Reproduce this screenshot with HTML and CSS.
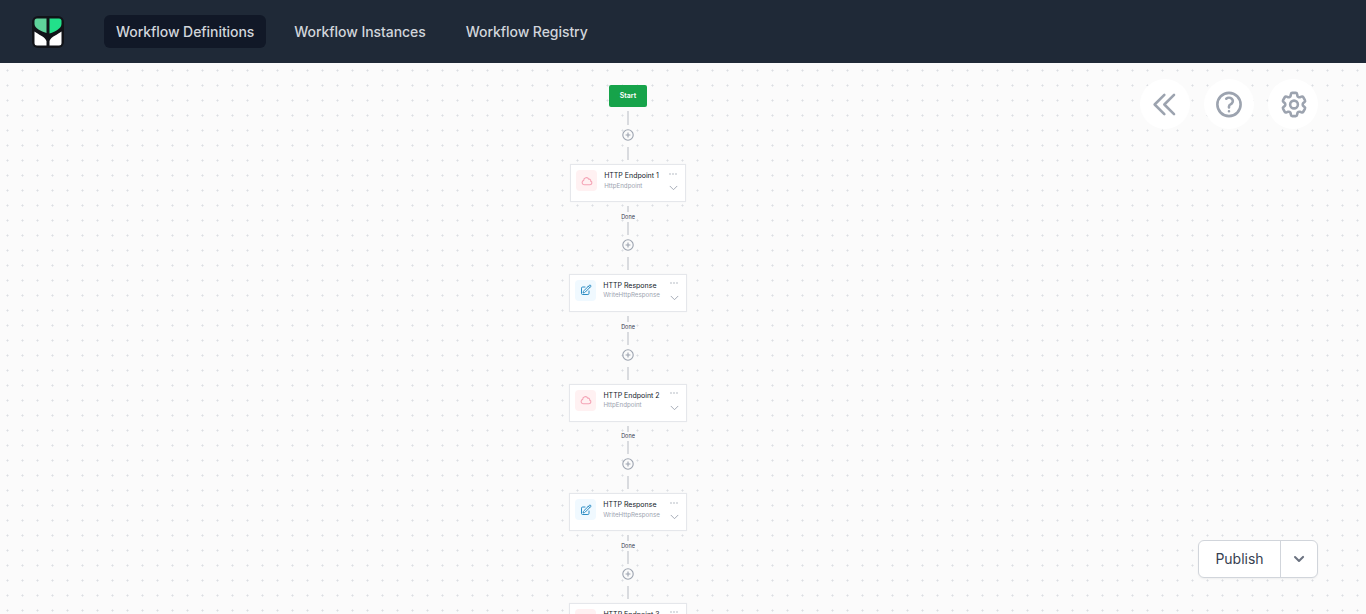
FILE: index.html
```html
<!DOCTYPE html>
<html lang="en">
<head>
<meta charset="utf-8">
<title>Workflow Designer</title>
<link rel="stylesheet" href="styles.css">
</head>
<body>
<header class="topbar">
  <svg class="logo" viewBox="0 0 32 32" aria-hidden="true">
    <rect width="32" height="32" rx="6" fill="#111318"/>
    <path d="M2.5 5Q2.5 2.5 5 2.5H14.5V17C9 15.5 2.5 12 2.5 8Z" fill="#5fd39b"/>
    <path d="M17.5 2.5H27Q29.5 2.5 29.5 5V8C29.5 12 24 15.5 17.5 17.5Z" fill="#22e08a"/>
    <path d="M2.5 15.5C6 18.5 13 20.5 14.5 25V29.5H5Q2.5 29.5 2.5 27Z" fill="#fff"/>
    <path d="M29.5 15.5C26 18.5 19 20.5 17.5 25V29.5H27Q29.5 29.5 29.5 27Z" fill="#fff"/>
  </svg>
  <nav class="nav">
    <a class="nav-item active">Workflow Definitions</a>
    <a class="nav-item">Workflow Instances</a>
    <a class="nav-item">Workflow Registry</a>
  </nav>
</header>
<main class="designer">
  <svg class="grid" aria-hidden="true">
    <defs>
      <pattern id="dots" x="0" y="0" width="15" height="15" patternUnits="userSpaceOnUse">
        <path d="M7.5 6v3M6 7.5h3" stroke="#e8eaed" stroke-width="1" fill="none"/>
        <rect x="7" y="7" width="1" height="1" fill="#dcdee2"/>
      </pattern>
    </defs>
    <rect width="100%" height="100%" fill="url(#dots)"/>
  </svg>
  <div class="flow">
    <div class="start">Start</div>
    <div class="edge">
      <span class="line l14"></span>
      <svg class="plus" viewBox="0 0 12 12"><circle cx="6" cy="6" r="5.2"/><path d="M6 3.6v4.8M3.6 6h4.8"/></svg>
      <span class="line l13"></span>
    </div>

    <div class="node">
      <span class="badge pink"><svg viewBox="0 0 24 24"><path d="M2.25 15a4.5 4.5 0 0 0 4.5 4.5H18a3.75 3.75 0 0 0 1.33-7.26 3 3 0 0 0-3.84-3.84A5.25 5.25 0 0 0 5.46 10.7 4.5 4.5 0 0 0 2.25 15Z"/></svg></span>
      <span class="labels"><b>HTTP Endpoint 1</b><small>HttpEndpoint</small></span>
      <span class="acts"><svg class="dots" viewBox="0 0 8 2"><circle cx="1" cy="1" r=".7"/><circle cx="4" cy="1" r=".7"/><circle cx="7" cy="1" r=".7"/></svg><svg class="chev" viewBox="0 0 8 5"><path d="M.7.7 4 4l3.3-3.3"/></svg></span>
    </div>
    <div class="edge">
      <span class="line l6"></span><span class="done">Done</span><span class="line l13"></span>
      <svg class="plus" viewBox="0 0 12 12"><circle cx="6" cy="6" r="5.2"/><path d="M6 3.6v4.8M3.6 6h4.8"/></svg>
      <span class="line l13"></span>
    </div>

    <div class="node">
      <span class="badge blue"><svg viewBox="0 0 24 24"><path d="m16.86 4.49 1.69-1.69a1.88 1.88 0 1 1 2.65 2.65L10.58 16.07a4.5 4.5 0 0 1-1.9 1.13L6 18l.8-2.68a4.5 4.5 0 0 1 1.13-1.9l8.93-8.93Zm0 0L19.5 7.13M18 14v4.75A2.25 2.25 0 0 1 15.75 21H5.25A2.25 2.25 0 0 1 3 18.75V8.25A2.25 2.25 0 0 1 5.25 6H10"/></svg></span>
      <span class="labels"><b>HTTP Response</b><small>WriteHttpResponse</small></span>
      <span class="acts"><svg class="dots" viewBox="0 0 8 2"><circle cx="1" cy="1" r=".7"/><circle cx="4" cy="1" r=".7"/><circle cx="7" cy="1" r=".7"/></svg><svg class="chev" viewBox="0 0 8 5"><path d="M.7.7 4 4l3.3-3.3"/></svg></span>
    </div>
    <div class="edge">
      <span class="line l6"></span><span class="done">Done</span><span class="line l13"></span>
      <svg class="plus" viewBox="0 0 12 12"><circle cx="6" cy="6" r="5.2"/><path d="M6 3.6v4.8M3.6 6h4.8"/></svg>
      <span class="line l13"></span>
    </div>

    <div class="node">
      <span class="badge pink"><svg viewBox="0 0 24 24"><path d="M2.25 15a4.5 4.5 0 0 0 4.5 4.5H18a3.75 3.75 0 0 0 1.33-7.26 3 3 0 0 0-3.84-3.84A5.25 5.25 0 0 0 5.46 10.7 4.5 4.5 0 0 0 2.25 15Z"/></svg></span>
      <span class="labels"><b>HTTP Endpoint 2</b><small>HttpEndpoint</small></span>
      <span class="acts"><svg class="dots" viewBox="0 0 8 2"><circle cx="1" cy="1" r=".7"/><circle cx="4" cy="1" r=".7"/><circle cx="7" cy="1" r=".7"/></svg><svg class="chev" viewBox="0 0 8 5"><path d="M.7.7 4 4l3.3-3.3"/></svg></span>
    </div>
    <div class="edge">
      <span class="line l6"></span><span class="done">Done</span><span class="line l13"></span>
      <svg class="plus" viewBox="0 0 12 12"><circle cx="6" cy="6" r="5.2"/><path d="M6 3.6v4.8M3.6 6h4.8"/></svg>
      <span class="line l13"></span>
    </div>

    <div class="node">
      <span class="badge blue"><svg viewBox="0 0 24 24"><path d="m16.86 4.49 1.69-1.69a1.88 1.88 0 1 1 2.65 2.65L10.58 16.07a4.5 4.5 0 0 1-1.9 1.13L6 18l.8-2.68a4.5 4.5 0 0 1 1.13-1.9l8.93-8.93Zm0 0L19.5 7.13M18 14v4.75A2.25 2.25 0 0 1 15.75 21H5.25A2.25 2.25 0 0 1 3 18.75V8.25A2.25 2.25 0 0 1 5.25 6H10"/></svg></span>
      <span class="labels"><b>HTTP Response</b><small>WriteHttpResponse</small></span>
      <span class="acts"><svg class="dots" viewBox="0 0 8 2"><circle cx="1" cy="1" r=".7"/><circle cx="4" cy="1" r=".7"/><circle cx="7" cy="1" r=".7"/></svg><svg class="chev" viewBox="0 0 8 5"><path d="M.7.7 4 4l3.3-3.3"/></svg></span>
    </div>
    <div class="edge">
      <span class="line l6"></span><span class="done">Done</span><span class="line l13"></span>
      <svg class="plus" viewBox="0 0 12 12"><circle cx="6" cy="6" r="5.2"/><path d="M6 3.6v4.8M3.6 6h4.8"/></svg>
      <span class="line l13"></span>
    </div>

    <div class="node">
      <span class="badge pink"><svg viewBox="0 0 24 24"><path d="M2.25 15a4.5 4.5 0 0 0 4.5 4.5H18a3.75 3.75 0 0 0 1.33-7.26 3 3 0 0 0-3.84-3.84A5.25 5.25 0 0 0 5.46 10.7 4.5 4.5 0 0 0 2.25 15Z"/></svg></span>
      <span class="labels"><b>HTTP Endpoint 3</b><small>HttpEndpoint</small></span>
      <span class="acts"><svg class="dots" viewBox="0 0 8 2"><circle cx="1" cy="1" r=".7"/><circle cx="4" cy="1" r=".7"/><circle cx="7" cy="1" r=".7"/></svg><svg class="chev" viewBox="0 0 8 5"><path d="M.7.7 4 4l3.3-3.3"/></svg></span>
    </div>
  </div>

  <div class="tools">
    <button class="tool" aria-label="Collapse"><svg viewBox="0 0 24 24"><path d="M11.1 19.5 3.6 12l7.5-7.5M18.6 19.5 11.1 12l7.5-7.5"/></svg></button>
    <button class="tool" aria-label="Help"><svg viewBox="0 0 24 24"><circle cx="11.6" cy="12" r="9"/><path d="M9.48 7.52c1.17-1.03 3.07-1.03 4.24 0 1.17 1.03 1.17 2.69 0 3.71-.2.18-.43.33-.67.44-.75.36-1.45 1-1.45 1.83v.75M11.6 17.25h.01"/></svg></button>
    <button class="tool" aria-label="Settings"><svg viewBox="-.4 0 24 24"><path d="M9.59 3.94c.09-.54.56-.94 1.11-.94h2.59c.55 0 1.02.4 1.11.94l.21 1.28c.06.37.31.68.64.87.08.04.15.08.22.13.33.2.72.26 1.07.13l1.22-.46c.52-.2 1.1.01 1.37.49l1.3 2.25c.27.48.16 1.08-.26 1.43l-1 .83c-.29.24-.43.6-.42.98v.26c-.01.37.13.74.42.98l1 .83c.42.35.53.95.26 1.43l-1.3 2.25c-.27.48-.85.69-1.37.49l-1.22-.46c-.35-.13-.74-.07-1.07.13l-.22.13c-.33.19-.58.5-.64.87l-.21 1.28c-.09.54-.56.94-1.11.94h-2.6c-.55 0-1.02-.4-1.11-.94l-.21-1.28c-.06-.37-.31-.68-.64-.87l-.22-.13c-.33-.2-.72-.26-1.07-.13l-1.22.46c-.52.2-1.1-.01-1.37-.49l-1.3-2.25c-.27-.48-.16-1.08.26-1.43l1-.83c.29-.24.43-.6.42-.98v-.26c.01-.37-.13-.74-.42-.98l-1-.83c-.42-.35-.53-.95-.26-1.43l1.3-2.25c.27-.48.85-.69 1.37-.49l1.22.46c.35.13.74.07 1.07-.13l.22-.13c.33-.19.58-.5.64-.87l.21-1.28Z"/><circle cx="12" cy="12" r="3"/></svg></button>
  </div>

  <div class="publish">
    <button class="pub-main">Publish</button>
    <button class="pub-more" aria-label="More"><svg viewBox="0 0 20 20"><path d="M5.3 7.3a1 1 0 0 1 1.4 0L10 10.6l3.3-3.3a1 1 0 1 1 1.4 1.4l-4 4a1 1 0 0 1-1.4 0l-4-4a1 1 0 0 1 0-1.4Z"/></svg></button>
  </div>
</main>
</body>
</html>
```
FILE: styles.css
```css
* { box-sizing: border-box; }
html, body { margin: 0; height: 100%; overflow: hidden; }
body {
  display: flex;
  flex-direction: column;
  font-family: Inter, "Liberation Sans", sans-serif;
  background: #fbfbfb;
}
.topbar {
  flex: none;
  height: 63px;
  background: #1f2937;
  display: flex;
  align-items: center;
  padding-left: 32px;
}
.logo { width: 32px; height: 32px; flex: none; }
.nav { display: flex; margin-left: 40px; gap: 16px; }
.nav-item {
  padding: 0 12px;
  height: 33px;
  line-height: 34px;
  border-radius: 6px;
  font-size: 14px;
  font-weight: 500;
  letter-spacing: -0.06px;
  color: #d1d5db;
  white-space: nowrap;
}
.nav-item.active { background: #111827; }

.designer {
  position: relative;
  flex: 1;
  min-height: 0;
  overflow: hidden;
  background: #fbfbfb;
}
.grid { position: absolute; inset: 0; width: 100%; height: 100%; }
.flow {
  position: relative;
  width: 1256px;
  display: flex;
  flex-direction: column;
  align-items: center;
  padding-top: 22px;
}
.start {
  width: 38px;
  height: 22px;
  padding-bottom: 1px;
  background: #16a34a;
  border-radius: 2px;
  color: #fff;
  font-size: 7px;
  font-weight: 600;
  display: flex;
  align-items: center;
  justify-content: center;
}
.edge {
  display: flex;
  flex-direction: column;
  align-items: center;
  padding: 4px 0;
}
.line { display: block; width: 2px; background: #d9dbdf; flex: none; }
.l14 { height: 14.3px; }
.l13 { height: 13px; }
.l6 { height: 6px; }
.plus {
  width: 12px;
  height: 12px;
  margin: 4.1px 0 5.9px;
  flex: none;
  fill: none;
  stroke: #9ca3af;
  stroke-width: 1.1;
}
.done {
  font-size: 5.5px;
  line-height: 8px;
  height: 8px;
  margin: 0.5px 0 1px;
  font-weight: 400;
  color: #374151;
}
.node {
  height: 38.2px;
  flex: none;
  display: flex;
  align-items: flex-start;
  background: #fff;
  border: 1px solid #e5e7eb;
  box-shadow: 0 0 1px rgba(0,0,0,.05);
  padding: 5px 7.5px 0 5.5px;
}
.badge {
  width: 21px;
  height: 21px;
  border-radius: 4px;
  display: flex;
  align-items: center;
  justify-content: center;
  flex: none;
}
.badge svg { fill: none; stroke-linecap: round; stroke-linejoin: round; }
.pink { background: #fff1f2; }
.pink svg { width: 12px; height: 12px; stroke-width: 2.2; stroke: #f4a3b5; }
.blue { background: #f0f9ff; }
.blue svg { width: 12px; height: 12px; stroke-width: 2; stroke: #2a8cc4; }
.labels {
  display: flex;
  flex-direction: column;
  margin-left: 7px;
  padding-top: 1px;
  white-space: nowrap;
}
.labels b { font-size: 7px; font-weight: 400; line-height: 9.5px; color: #111827; }
.labels small { font-size: 6.2px; font-weight: 400; line-height: 9px; color: #9ca3af; }
.acts {
  display: flex;
  flex-direction: column;
  align-items: center;
  margin-left: 10px;
  padding-top: 2.5px;
  width: 9px;
}
.dots { width: 8px; height: 2px; fill: #9ca3af; }
.chev { width: 9px; height: 6px; margin-top: 10.5px; fill: none; stroke: #9ca3af; stroke-width: .8; }

.tools {
  position: absolute;
  top: 16px;
  left: 1140px;
  display: flex;
  gap: 14px;
}
.tool {
  width: 50px;
  height: 50px;
  border: 0;
  padding: 0;
  border-radius: 50%;
  background: #fff;
  display: flex;
  align-items: center;
  justify-content: center;
}
.tool svg { width: 31px; height: 31px; fill: none; stroke: #9ca3af; stroke-width: 2; stroke-linecap: round; stroke-linejoin: round; }
.publish {
  position: absolute;
  left: 1198px;
  top: 477px;
  width: 120px;
  height: 38px;
  display: flex;
  background: #fff;
  border: 1px solid #d1d5db;
  border-radius: 6px;
  box-shadow: 0 1px 2px rgba(0,0,0,.05);
}
.pub-main {
  flex: 1;
  border: 0;
  background: none;
  padding: 0 0 2px 0;
  font: 400 14px Inter, "Liberation Sans", sans-serif;
  color: #374151;
}
.pub-more {
  width: 37px;
  border: 0;
  border-left: 1px solid #d1d5db;
  background: none;
  padding: 0;
  display: flex;
  align-items: center;
  justify-content: center;
}
.pub-more svg { width: 20px; height: 20px; fill: #6b7280; }
```
